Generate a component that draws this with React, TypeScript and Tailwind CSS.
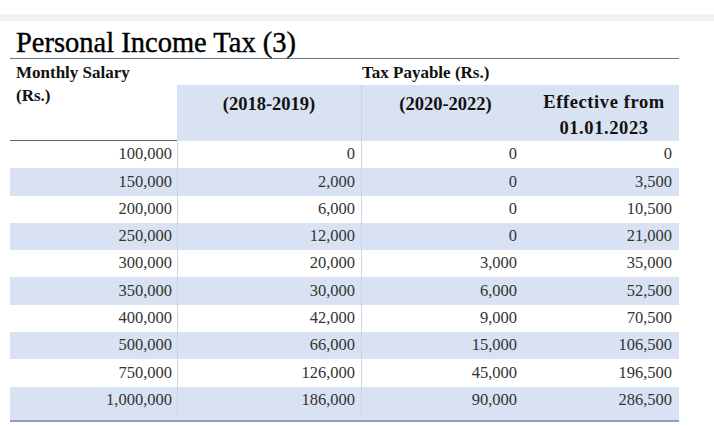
const rows: [string, string, string, string][] = [
  ["100,000", "0", "0", "0"],
  ["150,000", "2,000", "0", "3,500"],
  ["200,000", "6,000", "0", "10,500"],
  ["250,000", "12,000", "0", "21,000"],
  ["300,000", "20,000", "3,000", "35,000"],
  ["350,000", "30,000", "6,000", "52,500"],
  ["400,000", "42,000", "9,000", "70,500"],
  ["500,000", "66,000", "15,000", "106,500"],
  ["750,000", "126,000", "45,000", "196,500"],
  ["1,000,000", "186,000", "90,000", "286,500"],
];

export default function App() {
  return (
    <div className="w-[714px] h-[426px] bg-white overflow-hidden font-['Liberation_Serif',serif]">
      <div className="h-[14px]" />
      <div className="h-[7px] bg-[#f2f2f2]" />

      <div className="ml-[10px] w-[669px]">
        <div className="h-[38px] flex items-end pl-[6px] border-b border-[#5d7b91]">
          <h1 className="text-[28.5px] leading-[30px] text-black [-webkit-text-stroke:0.4px_black]">Personal Income Tax (3)</h1>
        </div>

        {/* header */}
        <div className="grid grid-cols-[167px_184px_168px_150px] grid-rows-[26px_56px] font-bold text-[#111]">
          <div className="row-span-2 pl-[6px] pt-[2px] text-[17px] leading-[23px] border-b border-[#4f6b80]">
            <div>Monthly Salary</div>
            <div>(Rs.)</div>
          </div>
          <div />
          <div className="col-span-2 pl-[1px] pt-[2px] text-[17px] leading-[23px]">Tax Payable (Rs.)</div>
          <div className="bg-[#d9e2f2] text-center pt-[6px] text-[18.5px] leading-[26px]">(2018-2019)</div>
          <div className="bg-[#d9e2f2] border-l border-[#c9d3e2] text-center pt-[6px] text-[18.5px] leading-[26px]">(2020-2022)</div>
          <div className="bg-[#d9e2f2] text-center pt-[4px] text-[18.5px] leading-[26px] tracking-[0.6px]">
            <div>Effective from</div>
            <div>01.01.2023</div>
          </div>
        </div>

        {/* body */}
        <div className="border-b-2 border-[#8ea2b4]">
          {rows.map((r, i) => {
            const last = i === rows.length - 1;
            return (
              <div
                key={r[0]}
                className={`grid grid-cols-[167px_184px_168px_150px] text-[16.5px] text-[#333] ${
                  i % 2 === 1 ? "bg-[#d9e2f2]" : "bg-white"
                } ${last ? "h-[33px] pb-[5px]" : "h-[27.3px]"}`}
              >
                <div className="flex items-center justify-end pr-[5px]">{r[0]}</div>
                <div className="flex items-center justify-end pr-[6px] border-l border-[#ccd5e3]">{r[1]}</div>
                <div className="flex items-center justify-end pr-[12px] border-l border-[#ccd5e3]">{r[2]}</div>
                <div className="flex items-center justify-end pr-[7px]">{r[3]}</div>
              </div>
            );
          })}
        </div>
      </div>
    </div>
  );
}
